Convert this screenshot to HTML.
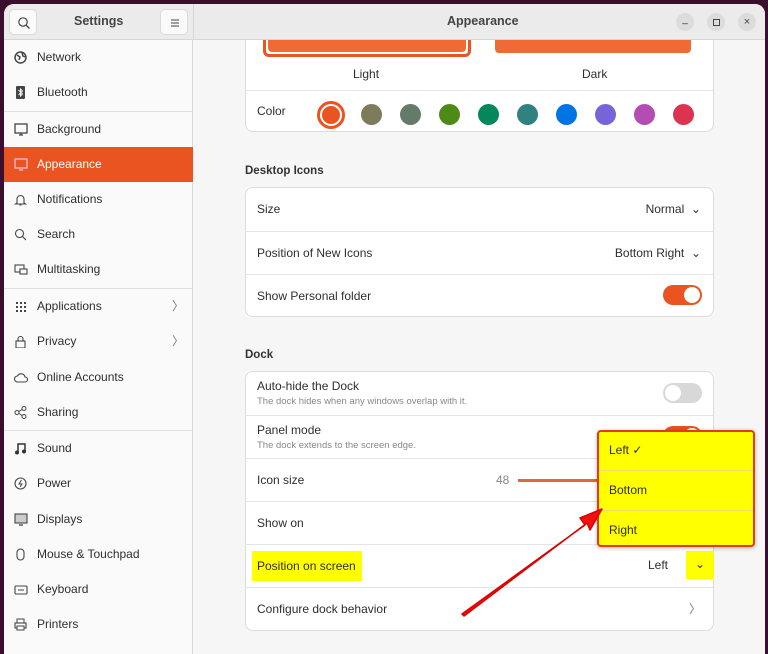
<!DOCTYPE html>
<html><head><meta charset="utf-8"><style>
*{box-sizing:border-box;margin:0;padding:0}
body{width:768px;height:641px;overflow:hidden;background:#3a0f2e;font-family:"Liberation Sans",sans-serif;font-size:12px;color:#2e2e2e;position:relative}
.win{position:absolute;left:4px;top:4px;width:761px;height:650px;background:#f6f6f6;border-radius:10px 10px 0 0;overflow:hidden}
.hb{position:absolute;left:0;top:0;width:761px;height:36px;background:#ebebeb;border-bottom:1px solid #d6d6d6;z-index:5}
.side{position:absolute;left:0;top:34px;width:189px;height:620px;background:#fafafa;border-right:1px solid #d8d8d8}
.abs{position:absolute}
.it{position:absolute;left:0;width:189px;height:35px;line-height:35px;padding-left:33px;font-size:12px;color:#2e2e2e}
.it svg{position:absolute;left:10px;top:11px}
.sep{position:absolute;left:0;width:189px;height:1px;background:#e0e0e0}
.card{position:absolute;left:241px;width:469px;background:#fff;border:1px solid #dcdcdc;border-radius:8px}
.row{position:absolute;left:0;width:467px;height:43px;border-top:1px solid #e4e4e4;padding-left:11px;line-height:42px;font-size:12px}
.h{position:absolute;left:241px;font-weight:bold;font-size:11.5px;color:#333}
.tog{position:absolute;width:39px;height:20px;border-radius:10px}
.tog i{position:absolute;top:2px;width:16px;height:16px;border-radius:50%;background:#fff}
.dot{position:absolute;width:21px;height:21px;border-radius:50%}
.val{position:absolute;right:12px;top:0;font-size:12px}
</style></head><body>
<div class="win">
 <div class="hb">
  <div class="abs" style="left:5px;top:5px;width:28px;height:26px;background:#fafafa;border-radius:5px;border:1px solid #dadada"><svg width="14" height="14" style="position:absolute;left:7px;top:6px"><circle cx="6" cy="6" r="4.2" fill="none" stroke="#444" stroke-width="1.2"/><line x1="9" y1="9" x2="12.5" y2="12.5" stroke="#444" stroke-width="1.3"/></svg></div>
  <div class="abs" style="left:70px;top:10px;font-weight:bold;font-size:12.5px;color:#444">Settings</div>
  <div class="abs" style="left:156px;top:5px;width:28px;height:26px;background:#fafafa;border-radius:5px;border:1px solid #dadada"><svg width="12" height="10" style="position:absolute;left:8px;top:8px"><path d="M2 2h8M2 5h8M2 8h8" stroke="#444" stroke-width="1"/></svg></div>
  <div class="abs" style="left:189px;top:0;width:1px;height:36px;background:#d6d6d6"></div>
  <div class="abs" style="left:443px;top:10px;font-weight:bold;font-size:12.5px;color:#444">Appearance</div>
  <div class="abs" style="left:672px;top:9px;width:18px;height:18px;border-radius:50%;background:#dcdcdc;font-size:10px;text-align:center;line-height:14px">_</div>
  <div class="abs" style="left:703px;top:9px;width:18px;height:18px;border-radius:50%;background:#dcdcdc"><div class="abs" style="left:6px;top:6px;width:7px;height:7px;border:1px solid #444"></div></div>
  <div class="abs" style="left:734px;top:9px;width:18px;height:18px;border-radius:50%;background:#dcdcdc;font-size:11px;text-align:center;line-height:18px;color:#444">×</div>
 </div>
 <div class="side">
  <div class="it" style="top:2px"><svg width="13" height="13"><circle cx="6.5" cy="6.5" r="5.5" fill="none" stroke="#444" stroke-width="1.5"/><path d="M3 4l3 2-1 3M8 2l1 3 2 1" stroke="#444" stroke-width="1.5" fill="none"/></svg>Network</div>
  <div class="it" style="top:37px"><svg width="13" height="13"><rect x="2" y="0" width="9" height="13" rx="1" fill="#444"/><path d="M4.5 4l4 4-2 2V3l2 2-4 4" stroke="#fff" stroke-width="0.9" fill="none"/></svg>Bluetooth</div>
  <div class="sep" style="top:73px"></div>
  <div class="it" style="top:74px"><svg width="14" height="13"><rect x="1" y="1" width="12" height="9" fill="none" stroke="#444" stroke-width="1.3"/><path d="M5 12h4M7 10v2" stroke="#444" stroke-width="1.3"/></svg>Background</div>
  <div class="it" style="top:109px;background:#e95420;color:#fff"><svg width="14" height="13"><rect x="1" y="1" width="12" height="9" fill="none" stroke="#fbd" stroke-width="1.3"/><path d="M5 12h4" stroke="#fbd" stroke-width="1.3"/></svg>Appearance</div>
  <div class="it" style="top:144px"><svg width="13" height="13"><path d="M3 10V6a3.5 3.5 0 017 0v4l1.5 1h-10z M5.5 12h2" stroke="#444" stroke-width="1.1" fill="none"/></svg>Notifications</div>
  <div class="it" style="top:179px"><svg width="13" height="13"><circle cx="5.5" cy="5.5" r="4" fill="none" stroke="#444" stroke-width="1.1"/><line x1="8.5" y1="8.5" x2="12" y2="12" stroke="#444" stroke-width="1.2"/></svg>Search</div>
  <div class="it" style="top:214px"><svg width="14" height="13"><rect x="1" y="2" width="9" height="7" fill="none" stroke="#444" stroke-width="1.1"/><rect x="6" y="6" width="7" height="5" fill="#fafafa" stroke="#444" stroke-width="1.1"/></svg>Multitasking</div>
  <div class="sep" style="top:250px"></div>
  <div class="it" style="top:251px"><svg width="13" height="13"><g fill="#444"><rect x="2" y="2" width="2" height="2"/><rect x="6" y="2" width="2" height="2"/><rect x="10" y="2" width="2" height="2"/><rect x="2" y="6" width="2" height="2"/><rect x="6" y="6" width="2" height="2"/><rect x="10" y="6" width="2" height="2"/><rect x="2" y="10" width="2" height="2"/><rect x="6" y="10" width="2" height="2"/><rect x="10" y="10" width="2" height="2"/></g></svg>Applications<span class="abs" style="left:168px;color:#777">〉</span></div>
  <div class="it" style="top:286px"><svg width="13" height="13"><rect x="2" y="6" width="9" height="7" fill="none" stroke="#444" stroke-width="1.1"/><path d="M4 6V4a2.5 2.5 0 015 0v2" stroke="#444" stroke-width="1.1" fill="none"/></svg>Privacy<span class="abs" style="left:168px;color:#777">〉</span></div>
  <div class="it" style="top:322px"><svg width="14" height="13"><path d="M3.5 11a3 3 0 010-6 4 4 0 017.5 1 2.5 2.5 0 010 5z" stroke="#444" stroke-width="1.1" fill="none"/></svg>Online Accounts</div>
  <div class="it" style="top:357px"><svg width="13" height="13"><circle cx="3" cy="6.5" r="2" fill="none" stroke="#444"/><circle cx="10" cy="2.5" r="2" fill="none" stroke="#444"/><circle cx="10" cy="10.5" r="2" fill="none" stroke="#444"/><path d="M5 5.5l3-2M5 7.5l3 2" stroke="#444"/></svg>Sharing</div>
  <div class="sep" style="top:392px"></div>
  <div class="it" style="top:393px"><svg width="13" height="13"><path d="M4 10V2h7v7" stroke="#333" stroke-width="1.5" fill="none"/><circle cx="3" cy="10.5" r="2" fill="#333"/><circle cx="10" cy="9.5" r="2" fill="#333"/></svg>Sound</div>
  <div class="it" style="top:428px"><svg width="13" height="13"><circle cx="6.5" cy="6.5" r="5.5" fill="none" stroke="#444" stroke-width="1.1"/><path d="M7.5 3L5 7h3l-2 3" stroke="#444" fill="none"/></svg>Power</div>
  <div class="it" style="top:464px"><svg width="14" height="13"><rect x="1" y="1" width="12" height="9" fill="#ccc" stroke="#444" stroke-width="1.1"/><path d="M5 12h4" stroke="#444" stroke-width="1.3"/></svg>Displays</div>
  <div class="it" style="top:499px"><svg width="13" height="13"><rect x="3" y="1" width="7" height="11" rx="3.5" fill="none" stroke="#444" stroke-width="1.1"/></svg>Mouse &amp; Touchpad</div>
  <div class="it" style="top:534px"><svg width="14" height="13"><rect x="1" y="3" width="12" height="8" rx="1" fill="none" stroke="#444" stroke-width="1.1"/><path d="M4 7h6" stroke="#444"/></svg>Keyboard</div>
  <div class="it" style="top:569px"><svg width="13" height="13"><rect x="1" y="5" width="11" height="5" fill="none" stroke="#444" stroke-width="1.1"/><rect x="3" y="1" width="7" height="4" fill="none" stroke="#444"/><rect x="3" y="8" width="7" height="4" fill="#fafafa" stroke="#444"/></svg>Printers</div>
 </div>

 <!-- card 1 -->
 <div class="card" style="top:-20px;height:148px">
  <div class="abs" style="left:17px;top:22px;width:208px;height:50px;border:3px solid #e95420;border-radius:6px;background:#fff"><div class="abs" style="left:2px;top:0;width:198px;height:42px;background:#f06a35;border-radius:0 0 4px 4px"></div></div>
  <div class="abs" style="left:249px;top:20px;width:196px;height:48px;background:#f06a35;border-radius:0 0 4px 4px"></div>
  <div class="abs" style="left:107px;top:82px">Light</div>
  <div class="abs" style="left:336px;top:82px">Dark</div>
  <div class="row" style="top:105px;height:43px;line-height:41px">Color</div>
  <div class="dot" style="left:71px;top:116px;width:28px;height:28px;border:3px solid #e95420;background:#fff"><div class="abs" style="left:2px;top:2px;width:18px;height:18px;border-radius:50%;background:#e95420"></div></div>
  <div class="dot" style="left:115px;top:119px;background:#7e7a5c"></div>
  <div class="dot" style="left:154px;top:119px;background:#657b69"></div>
  <div class="dot" style="left:193px;top:119px;background:#4e8a16"></div>
  <div class="dot" style="left:232px;top:119px;background:#03875b"></div>
  <div class="dot" style="left:271px;top:119px;background:#308280"></div>
  <div class="dot" style="left:310px;top:119px;background:#0073e5"></div>
  <div class="dot" style="left:349px;top:119px;background:#7764d8"></div>
  <div class="dot" style="left:388px;top:119px;background:#b34cb3"></div>
  <div class="dot" style="left:427px;top:119px;background:#da3450"></div>
 </div>

 <div class="h" style="top:161px">Desktop Icons</div>
 <div class="card" style="top:183px;height:130px">
  <div class="row" style="top:0;border-top:none">Size<span class="val">Normal&nbsp;&nbsp;⌄</span></div>
  <div class="row" style="top:43px">Position of New Icons<span class="val">Bottom Right&nbsp;&nbsp;⌄</span></div>
  <div class="row" style="top:86px">Show Personal folder</div>
  <div class="tog" style="left:417px;top:97px;background:#e95420"><i style="left:21px"></i></div>
 </div>

 <div class="h" style="top:345px">Dock</div>
 <div class="card" style="top:367px;height:260px">
  <div class="row" style="top:0;border-top:none;line-height:14px;padding-top:7px">Auto-hide the Dock<br><span style="font-size:9.5px;color:#888">The dock hides when any windows overlap with it.</span></div>
  <div class="tog" style="left:417px;top:11px;background:#d8d8d8"><i style="left:2px"></i></div>
  <div class="row" style="top:43px;line-height:14px;padding-top:7px">Panel mode<br><span style="font-size:9.5px;color:#888">The dock extends to the screen edge.</span></div>
  <div class="tog" style="left:417px;top:54px;background:#e95420"><i style="left:21px"></i></div>
  <div class="row" style="top:86px">Icon size<span class="abs" style="left:250px;color:#888">48</span></div>
  <div class="abs" style="left:272px;top:107px;width:90px;height:3px;background:#e2683c"></div>
  <div class="row" style="top:129px">Show on</div>
  <div class="row" style="top:172px"></div>
  <div class="abs" style="left:6px;top:179px;width:110px;height:30px;background:#ffff00;padding-left:5px;line-height:30px">Position on screen</div>
  <div class="abs" style="left:402px;top:186px">Left</div>
  <div class="abs" style="left:440px;top:179px;width:28px;height:28px;background:#ffff00;text-align:center;line-height:26px">⌄</div>
  <div class="row" style="top:215px">Configure dock behavior<span class="val" style="color:#777">〉</span></div>
 </div>
</div>

<div class="abs" style="left:597px;top:430px;width:158px;height:117px;background:#ffff00;border:2px solid #e23a1c;border-radius:4px;box-shadow:0 1px 4px rgba(0,0,0,.3)">
 <div class="abs" style="left:10px;top:11px">Left ✓</div>
 <div class="abs" style="left:0;top:38px;width:154px;height:1px;background:#e8e060"></div>
 <div class="abs" style="left:10px;top:51px">Bottom</div>
 <div class="abs" style="left:0;top:78px;width:154px;height:1px;background:#e8e060"></div>
 <div class="abs" style="left:10px;top:91px">Right</div>
</div>
<svg class="abs" style="left:0;top:0" width="768" height="641"><path d="M462 614 L585 525 L580 518 L602 509 L590 530 L587 523 L464 616 Z" fill="#f01010" stroke="#d00" stroke-width="1.5" stroke-linejoin="round"/></svg>
</body></html>
